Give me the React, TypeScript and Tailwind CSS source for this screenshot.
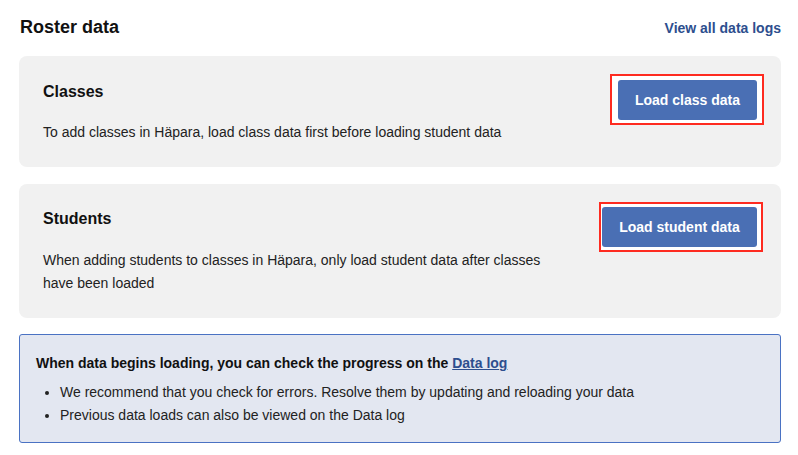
import React from 'react';

type SectionProps = {
  title: string
  text: string
  button: string
  btnWidth: string
  ring: string
  pad: string
  gap: string
}

function Section({title, text, button, btnWidth, ring, pad, gap}: SectionProps) {
  return (
    <div className={`flex justify-between rounded-lg bg-[#f1f1f1] pl-6 pr-6 ${pad}`}>
      <div className="max-w-[530px]">
        <h3 className="text-[16px] leading-6 font-bold text-[#111]">{title}</h3>
        <p className={`${gap} text-[14px] leading-[23px] text-[#222]`}>{text}</p>
      </div>
      <div className="relative self-start">
        <span className={`absolute border-2 border-[#fe2b20] bg-white ${ring}`} />
        <button
          type="button"
          className={`relative h-10 ${btnWidth} rounded-[3px] bg-[#4a6fb4] text-[14px] font-bold text-white`}
        >
          {button}
        </button>
      </div>
    </div>
  )
}

export default function App() {
  return (
    <div className="min-h-[455px] bg-white pl-[19px] pt-[13px] font-['Liberation_Sans',Arial,sans-serif] text-black">
      <div className="w-[762px]">
        <div className="flex items-baseline justify-between">
          <h2 className="pl-px text-[18px] leading-7 font-bold text-[#111]">Roster data</h2>
          <a href="#" className="text-[14px] font-bold text-[#2d4e8e]">View all data logs</a>
        </div>

        <div className="mt-[15px] flex flex-col gap-[17px]">
          <Section
            title="Classes"
            text="To add classes in Häpara, load class data first before loading student data"
            button="Load class data"
            btnWidth="w-[139px]"
            ring="-left-[8px] -top-[6px] -right-[7px] -bottom-[5px]"
            pad="pt-6 pb-[23px]"
            gap="mt-[17px]"
          />
          <Section
            title="Students"
            text="When adding students to classes in Häpara, only load student data after classes have been loaded"
            button="Load student data"
            btnWidth="w-[155px]"
            ring="-left-[3px] -top-[5px] -right-[6px] -bottom-[5px]"
            pad="pt-[23px] pb-[23px]"
            gap="mt-[18px]"
          />

          <div className="-mt-px rounded-[3px] border border-[#4a72c3] bg-[#e3e7f1] px-4 pt-4 pb-[15px]">
            <p className="text-[14px] leading-6 font-bold text-[#111]">
              When data begins loading, you can check the progress on the{' '}
              <a href="#" className="text-[#2d4e8e] underline">Data log</a>
            </p>
            <ul className="mt-[6px] list-disc pl-6 text-[14px] leading-[23px] text-[#222]">
              <li>We recommend that you check for errors. Resolve them by updating and reloading your data</li>
              <li>Previous data loads can also be viewed on the Data log</li>
            </ul>
          </div>
        </div>
      </div>
    </div>
  )
}
